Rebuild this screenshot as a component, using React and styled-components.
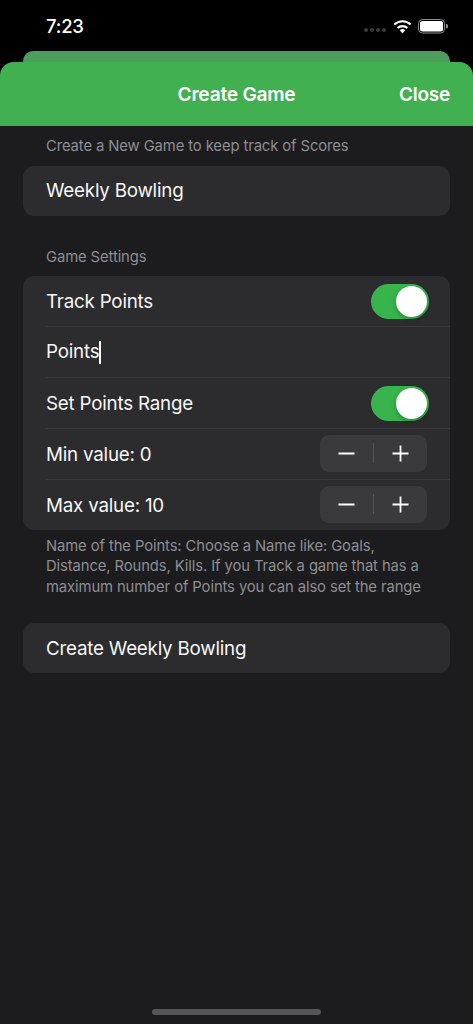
import React from "react";
import styled, { createGlobalStyle } from "styled-components";

const Global = createGlobalStyle`
  html, body { margin: 0; padding: 0; background: #000; }
  body { font-family: Inter, "Liberation Sans", sans-serif; -webkit-font-smoothing: antialiased; }
`;
const Screen = styled.div`
  width: 473px; height: 1024px; background: #000; overflow: hidden;
  display: flex; flex-direction: column; position: relative;
`;
const StatusBar = styled.div`
  height: 51px; flex: none; display: flex; align-items: flex-start; justify-content: space-between;
  padding: 16px 25px 0 46px; box-sizing: border-box; color: #fff;
`;
const Time = styled.span`font-size: 18.5px; font-weight: 500; line-height: 21px; letter-spacing: -0.2px;`;
const StatusIcons = styled.div`display: flex; align-items: center; gap: 6px; height: 20px;`;
const Dots = styled.div`
  display: flex; gap: 2px; margin-top: 8px; margin-right: 1px;
`;
const Dot = styled.i`width: 4px; height: 4px; border-radius: 50%; background: #3a3a3c;`;
const BackSheet = styled.div`
  height: 11px; flex: none; margin: 0 23px; background: #4d9d5c; border-radius: 10px 10px 0 0;
`;
const Sheet = styled.div`
  flex: 1; display: flex; flex-direction: column; background: #1c1c1e;
  border-radius: 14px 14px 0 0; overflow: hidden; position: relative;
`;
const Header = styled.header`
  height: 64px; flex: none; background: #41b050; color: #fff; display: grid;
  grid-template-columns: 1fr auto 1fr; align-items: center; padding: 0 23px;
`;
const Title = styled.h1`grid-column: 2; margin: 0; font-size: 19.2px; font-weight: 600; line-height: 24px; letter-spacing: -0.25px;`;
const Close = styled.button`
  grid-column: 3; justify-self: end; margin-top: 2px; padding: 0; border: 0; background: none; color: #fff;
  font: 600 19px/24px Inter, sans-serif; letter-spacing: -0.25px;
`;
const Content = styled.main`display: flex; flex-direction: column; padding: 0 23px;`;
const SectionLabel = styled.p`
  margin: ${p => p.$top}px 0 0; padding: 0 46px; color: #8e8e93; font-size: 14.8px; line-height: 20px; letter-spacing: -0.1px;
`;
const Card = styled.section`
  margin-top: ${p => p.$top || 0}px; background: #2c2c2e; border-radius: 11px; display: flex; flex-direction: column; overflow: hidden;
`;
const Row = styled.div`
  height: ${p => p.$h || 51}px; box-sizing: border-box; margin-left: 23px; padding: ${p => p.$pt || 0}px 21px ${p => p.$pb || 0}px 0;
  display: flex; align-items: center; justify-content: space-between; color: #f7f7f7;
  font-size: 18.8px; letter-spacing: -0.22px;
  border-top: ${p => (p.$first ? "0" : "1px solid #38383a")};
`;
const Caret = styled.span`
  display: inline-block; width: 2px; height: 23px; margin-left: 0; background: #fff; vertical-align: middle;
`;
const Toggle = styled.div`
  width: 58px; height: 35px; border-radius: 18px; background: #37b44c; position: relative;
`;
const Knob = styled.div`
  position: absolute; top: 2px; right: 2px; width: 31px; height: 31px; border-radius: 50%; background: #fff;
  box-shadow: 0 2px 5px rgba(0,0,0,.25);
`;
const Stepper = styled.div`
  width: 107px; height: 37px; border-radius: 9px; background: #3a3a3c; display: flex; align-items: center;
  margin: 0 2px 2px 0;
`;
const StepButton = styled.span`flex: 1; display: flex; align-items: center; justify-content: center;`;
const StepDivider = styled.i`width: 1px; height: 20px; background: #545458;`;
const Footnote = styled.p`
  margin: 6px 0 0; padding: 0 46px; color: #8e8e93; font-size: 14.8px; line-height: 20.5px; letter-spacing: -0.1px;
`;
const HomeBar = styled.div`
  position: absolute; left: 152px; bottom: 9px; width: 169px; height: 6px; border-radius: 3px; background: #565658;
`;

const Minus = () => (
  <svg width="17" height="17" viewBox="0 0 17 17"><path d="M0.5 8.5h16" stroke="#fff" strokeWidth="1.8" /></svg>
);
const Plus = () => (
  <svg width="17" height="17" viewBox="0 0 17 17"><path d="M0.5 8.5h16M8.5 0.5v16" stroke="#fff" strokeWidth="1.8" /></svg>
);
const Switch = () => <Toggle><Knob /></Toggle>;
const StepControl = () => (
  <Stepper>
    <StepButton><Minus /></StepButton>
    <StepDivider />
    <StepButton><Plus /></StepButton>
  </Stepper>
);

export default function App() {
  return (
    <Screen>
      <Global />
      <StatusBar>
        <Time>7:23</Time>
        <StatusIcons>
          <Dots><Dot /><Dot /><Dot /><Dot /></Dots>
          <svg width="19" height="15" viewBox="0 0 19 15">
            <path d="M9.5 14.5 6.7 11.3a4 4 0 0 1 5.6 0Z" fill="#fff" />
            <path d="M4.6 9.1a7 7 0 0 1 9.8 0" stroke="#fff" strokeWidth="2.1" fill="none" />
            <path d="M1.4 5.6a11.6 11.6 0 0 1 16.2 0" stroke="#fff" strokeWidth="2.1" fill="none" />
          </svg>
          <svg width="30" height="15" viewBox="0 0 30 15">
            <rect x="0.5" y="0.5" width="26" height="13.5" rx="4" fill="none" stroke="#8e8e93" />
            <rect x="2" y="2" width="23" height="10.5" rx="2.5" fill="#fff" />
            <path d="M28 5v4.5a2.2 2.2 0 0 0 0-4.5Z" fill="#8e8e93" />
          </svg>
        </StatusIcons>
      </StatusBar>
      <BackSheet />
      <Sheet>
        <Header>
          <Title>Create Game</Title>
          <Close>Close</Close>
        </Header>
        <SectionLabel $top={10}>Create a New Game to keep track of Scores</SectionLabel>
        <Content>
          <Card $top={10}><Row $first $h={50} $pb={1}>Weekly Bowling</Row></Card>
        </Content>
        <SectionLabel $top={31}>Game Settings</SectionLabel>
        <Content>
          <Card $top={9}>
            <Row $first $h={50} $pt={1}>Track Points<Switch /></Row>
            <Row><span>Points<Caret /></span></Row>
            <Row>Set Points Range<Switch /></Row>
            <Row $h={50.5} $pt={1}>Min value: 0<StepControl /></Row>
            <Row $pt={1}>Max value: 10<StepControl /></Row>
          </Card>
        </Content>
        <Footnote>Name of the Points: Choose a Name like: Goals, Distance, Rounds, Kills. If you Track a game that has a maximum number of Points you can also set the range</Footnote>
        <Content>
          <Card $top={26}><Row $first $h={50}>Create Weekly Bowling</Row></Card>
        </Content>
        <HomeBar />
      </Sheet>
    </Screen>
  );
}
